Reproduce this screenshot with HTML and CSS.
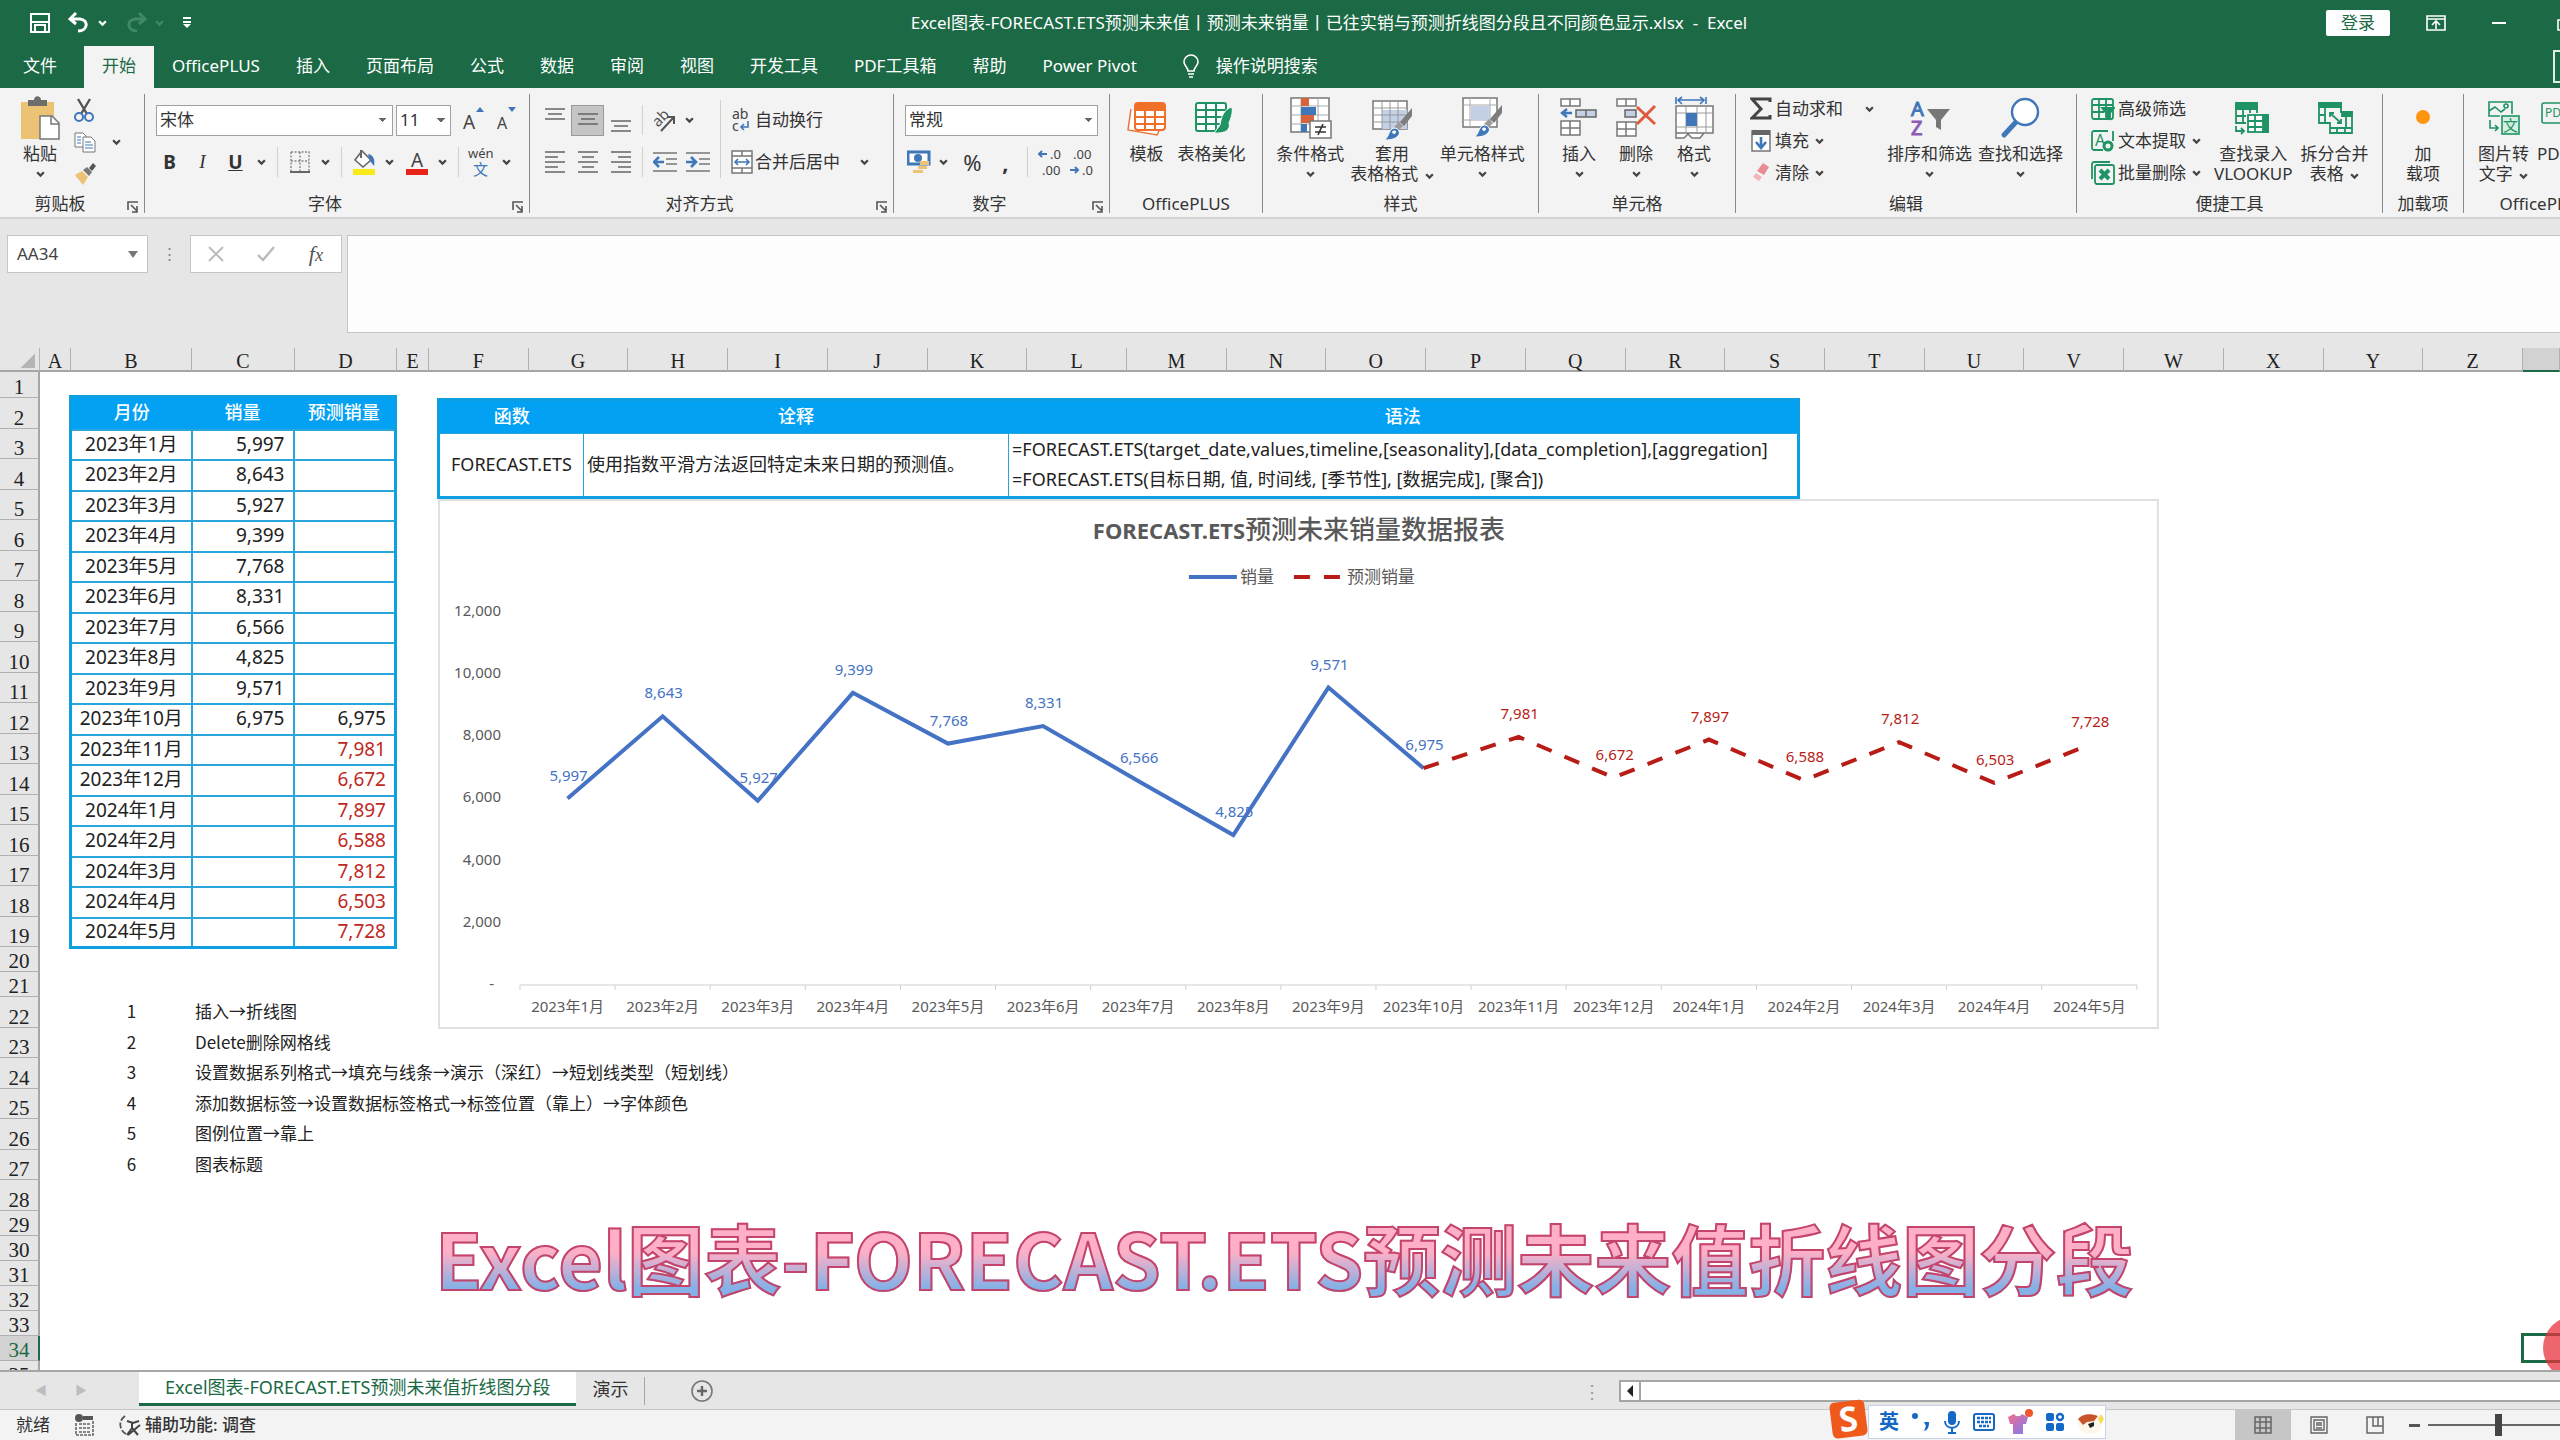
FILE: index.html
```html
<!DOCTYPE html>
<html lang="zh-CN">
<head>
  <meta charset="UTF-8">
  <meta name="viewport" content="width=device-width, initial-scale=1.0">
  <title>Excel图表-FORECAST.ETS预测未来值</title>
  <link rel="stylesheet" href="styles.css">
</head>
<body>
  <!-- shared icons -->
  <svg class="defs" aria-hidden="true">
    <symbol id="chev" viewBox="0 0 8 6"><path d="M1 1l3 3 3-3" fill="none" stroke="currentColor" stroke-width="2"/></symbol>
    <symbol id="launch" viewBox="0 0 12 12"><path d="M1 9V1h10M4 4l6 6M10 5v6H5" fill="none" stroke="#555" stroke-width="1.6"/></symbol>
    <symbol id="brush" viewBox="0 0 40 40"><path d="M39 7L27 21l4 4 8-10z" fill="#7d7d7d"/><path d="M26 21l-5 5 4 4 5-5z" fill="#9a9a9a"/><path d="M10 39c6 0 5-11 11-12 5 0 7 5 4 8-4 4-9 4-15 4z" fill="#3f77b8" stroke="#fff"/><path d="M19 31c1-2 4-2 4 0s-3 3-4 0z" fill="#fff"/></symbol>
  </svg>

  <header class="titlebar">
    <div class="quick">
      <button aria-label="保存"><svg width="20" height="22" viewBox="0 0 20 22"><path d="M1 2h18v18H1zM5 20v-7h10v7M1 10h18" fill="none" stroke="#fff" stroke-width="2"/></svg></button>
      <button aria-label="撤消"><svg width="22" height="22" viewBox="0 0 22 22"><path d="M8 1L2 7l6 5M3 7h9c9 1 8 12-2 12" fill="none" stroke="#fff" stroke-width="3"/></svg><svg class="chev"><use href="#chev"/></svg></button>
      <button aria-label="恢复" class="dim"><svg width="22" height="22" viewBox="0 0 22 22"><path d="M14 1l6 6-6 5M19 7h-9c-9 1-8 12 2 12" fill="none" stroke="currentColor" stroke-width="3"/></svg><svg class="chev"><use href="#chev"/></svg></button>
      <button aria-label="自定义"><svg width="10" height="12" viewBox="0 0 10 12"><path d="M1 1h8M1 5h8z" stroke="#fff" stroke-width="2"/><path d="M1 7h8l-4 4z" fill="#fff"/></svg></button>
    </div>
    <div class="title">Excel图表-FORECAST.ETS预测未来值丨预测未来销量丨已往实销与预测折线图分段且不同颜色显示.xlsx &nbsp;-&nbsp; Excel</div>
    <div class="window">
      <button class="login">登录</button>
      <button aria-label="功能区显示选项"><svg width="20" height="16" viewBox="0 0 20 16"><path d="M1 1h18v14H1zM1 4h18M10 14V7M6 10l4-4 4 4" fill="none" stroke="#fff" stroke-width="1.6"/></svg></button>
      <button aria-label="最小化" class="minimize"><svg width="14" height="16" viewBox="0 0 14 16"><path d="M0 8h14" stroke="#fff" stroke-width="2"/></svg></button>
      <button aria-label="还原" class="restore"><svg width="14" height="16" viewBox="0 0 14 16"><path d="M1 5h10v10H1zM4 5V1h10v10h-3" fill="none" stroke="#fff" stroke-width="1.6"/></svg></button>
    </div>
  </header>

  <nav class="tabs">
    <button class="file">文件</button>
    <button class="active">开始</button>
    <button>OfficePLUS</button>
    <button>插入</button>
    <button>页面布局</button>
    <button>公式</button>
    <button>数据</button>
    <button>审阅</button>
    <button>视图</button>
    <button>开发工具</button>
    <button>PDF工具箱</button>
    <button>帮助</button>
    <button>Power Pivot</button>
    <button class="tell"><svg width="18" height="24" viewBox="0 0 18 24"><path d="M6 17c0-4-4-5-4-9a7 7 0 0114 0c0 4-4 5-4 9zM6 20h6M7 23h4" fill="none" stroke="#fff" stroke-width="1.6"/></svg>操作说明搜索</button>
    <span class="share"></span>
  </nav>

  <div class="ribbon">
    <section class="group clip">
      <div class="body">
        <button class="big paste"><svg width="40" height="44" viewBox="0 0 40 44"><path d="M1 6h33v37H1z" fill="#ecc274"/><path d="M8 4h6c0-5 7-5 7 0h6v6H8z" fill="#6d6d6d"/><path d="M20 20h12l7 7v16H20z" fill="#fff" stroke="#777" stroke-width="1.5"/><path d="M31 20v8h8" fill="none" stroke="#777" stroke-width="1.5"/></svg><span>粘贴</span><svg class="chev"><use href="#chev"/></svg></button>
        <div class="stack">
          <button aria-label="剪切"><svg width="20" height="24" viewBox="0 0 20 24"><path d="M4 1l9 15M16 1L7 16" stroke="#555" stroke-width="2.4"/><circle cx="5" cy="19" r="4" fill="none" stroke="#3f77b8" stroke-width="2"/><circle cx="15" cy="19" r="4" fill="none" stroke="#3f77b8" stroke-width="2"/></svg></button>
          <button aria-label="复制"><svg width="22" height="22" viewBox="0 0 22 22"><path d="M1 2h8l3 3v11H1z" fill="#fff" stroke="#777"/><path d="M9 6h8l4 4v11H9z" fill="#fff" stroke="#777"/><path d="M3 6h4M3 9h4M3 12h4M11 11h6M11 14h8M11 17h8" stroke="#3f77b8"/></svg><svg class="chev"><use href="#chev"/></svg></button>
          <button aria-label="格式刷"><svg width="22" height="22" viewBox="0 0 22 22"><path d="M1 12l7-4 6 6-5 8z" fill="#ecc274"/><path d="M9 7l4-3 5 5-3 4z" fill="#777"/><path d="M15 5l4-5 3 3-4 5z" fill="#555"/></svg></button>
        </div>
      </div>
      <h2>剪贴板</h2><svg class="launch"><use href="#launch"/></svg>
    </section>

    <section class="group font">
      <div class="rows">
        <div class="row">
          <select class="w-font" aria-label="字体"><option>宋体</option></select>
          <select class="w-size" aria-label="字号"><option>11</option></select>
          <button class="tool" aria-label="增大字号"><svg width="24" height="30" viewBox="0 0 24 30"><text x="2" y="24" font-size="19" fill="#444">A</text><path d="M15 7l4-5 4 5z" fill="#3f77b8"/></svg></button>
          <button class="tool" aria-label="减小字号"><svg width="24" height="30" viewBox="0 0 24 30"><text x="3" y="24" font-size="16" fill="#444">A</text><path d="M14 2l4 5 4-5z" fill="#3f77b8"/></svg></button>
        </div>
        <div class="row">
          <button class="tool"><b>B</b></button>
          <button class="tool"><i class="serif">I</i></button>
          <button class="tool"><b><u>U</u></b></button>
          <svg class="chev"><use href="#chev"/></svg>
          <span class="sep"></span>
          <button class="tool" aria-label="边框"><svg width="20" height="22" viewBox="0 0 20 22"><path d="M1 1h18v19M1 1v19M10 1v19M1 10h18" fill="none" stroke="#888" stroke-width="1.4" stroke-dasharray="2 1.5"/><path d="M0 21h20" stroke="#666" stroke-width="2"/></svg></button>
          <svg class="chev"><use href="#chev"/></svg>
          <span class="sep"></span>
          <button class="tool" aria-label="填充颜色"><svg width="24" height="26" viewBox="0 0 24 26"><path d="M10 2l9 9-8 7-8-7z" fill="#fff" stroke="#666" stroke-width="1.6"/><path d="M9 9V1" stroke="#666" stroke-width="2"/><path d="M16 5c6 1 7 6 6 12l-4-5z" fill="#3f77b8"/><path d="M1 20h22v6H1z" fill="#f6ea18"/></svg></button>
          <svg class="chev"><use href="#chev"/></svg>
          <button class="tool" aria-label="字体颜色"><svg width="24" height="30" viewBox="0 0 24 30"><text x="6" y="20" font-size="19" fill="#444">A</text><path d="M1 22h22v6H1z" fill="#e8241a"/></svg></button>
          <svg class="chev"><use href="#chev"/></svg>
          <span class="sep"></span>
          <button class="tool" aria-label="拼音"><svg width="30" height="38" viewBox="0 0 30 38"><text x="2" y="15" font-size="13" fill="#444">wén</text><text x="7" y="32" font-size="15" fill="#3f77b8">文</text></svg></button>
          <svg class="chev"><use href="#chev"/></svg>
        </div>
      </div>
      <h2>字体</h2><svg class="launch"><use href="#launch"/></svg>
    </section>

    <section class="group align">
      <div class="rows">
        <div class="row">
          <button class="tool" aria-label="顶端对齐"><svg width="20" height="24" viewBox="0 0 20 24"><path d="M0 1h20M3 6h14M0 11h20" stroke="#666" stroke-width="1.6"/></svg></button>
          <button class="tool on" aria-label="垂直居中"><svg width="20" height="24" viewBox="0 0 20 24"><path d="M0 6h20M3 11h14M0 16h20" stroke="#666" stroke-width="1.6"/></svg></button>
          <button class="tool" aria-label="底端对齐"><svg width="20" height="24" viewBox="0 0 20 24"><path d="M0 13h20M3 18h14M0 23h20" stroke="#666" stroke-width="1.6"/></svg></button>
          <span class="sep"></span>
          <button class="tool" aria-label="方向"><svg width="28" height="28" viewBox="0 0 28 28"><text x="2" y="18" font-size="15" fill="#555" transform="rotate(-45 9 14)">ab</text><path d="M10 25L23 11M16 11h7v7" fill="none" stroke="#555" stroke-width="2"/></svg></button>
          <svg class="chev"><use href="#chev"/></svg>
        </div>
        <div class="row">
          <button class="tool" aria-label="左对齐"><svg width="20" height="24" viewBox="0 0 20 24"><path d="M0 2h20M0 7h13M0 12h20M0 17h13M0 22h20" stroke="#666" stroke-width="1.6"/></svg></button>
          <button class="tool" aria-label="居中"><svg width="20" height="24" viewBox="0 0 20 24"><path d="M0 2h20M4 7h12M0 12h20M4 17h12M0 22h20" stroke="#666" stroke-width="1.6"/></svg></button>
          <button class="tool" aria-label="右对齐"><svg width="20" height="24" viewBox="0 0 20 24"><path d="M0 2h20M7 7h13M0 12h20M7 17h13M0 22h20" stroke="#666" stroke-width="1.6"/></svg></button>
          <span class="sep"></span>
          <button class="tool" aria-label="减少缩进"><svg width="24" height="20" viewBox="0 0 24 20"><path d="M0 1h24M13 7h11M13 12h11M0 19h24" stroke="#777" stroke-width="1.6"/><path d="M11 10H2M6 5l-5 5 5 5" fill="none" stroke="#3f77b8" stroke-width="2.6"/></svg></button>
          <button class="tool" aria-label="增加缩进"><svg width="24" height="20" viewBox="0 0 24 20"><path d="M0 1h24M13 7h11M13 12h11M0 19h24" stroke="#777" stroke-width="1.6"/><path d="M0 10h9M5 5l5 5-5 5" fill="none" stroke="#3f77b8" stroke-width="2.6"/></svg></button>
        </div>
      </div>
      <div class="rows wrap">
        <button class="row"><svg width="22" height="30" viewBox="0 0 22 30"><text x="1" y="14" font-size="14" fill="#444">ab</text><text x="1" y="26" font-size="14" fill="#444">c</text><path d="M17 16v6h-6M13 19l-3 3 3 3" fill="none" stroke="#3f77b8" stroke-width="1.6"/></svg>自动换行</button>
        <button class="row"><svg width="22" height="26" viewBox="0 0 22 26"><path d="M1 2h20v22H1zM1 7h20M1 19h20M11 2v5M11 19v5" fill="#fff" stroke="#777" stroke-width="1.5"/><path d="M4 13h14M7 10l-3 3 3 3M15 10l3 3-3 3" fill="none" stroke="#3f77b8" stroke-width="1.6"/></svg>合并后居中<svg class="chev"><use href="#chev"/></svg></button>
      </div>
      <h2>对齐方式</h2><svg class="launch"><use href="#launch"/></svg>
    </section>

    <section class="group number">
      <div class="rows">
        <div class="row"><select class="w-num" aria-label="数字格式"><option>常规</option></select></div>
        <div class="row">
          <button class="tool" aria-label="会计数字格式"><svg width="24" height="24" viewBox="0 0 24 24"><path d="M1 2h21v12H1z" fill="#fff" stroke="#3f77b8" stroke-width="3"/><circle cx="11" cy="8" r="4" fill="#3f77b8"/><path d="M13 11h9v4h-9zM11 16h9v3h-9zM6 20h10v3H6z" fill="#ecc274"/></svg></button>
          <svg class="chev"><use href="#chev"/></svg>
          <button class="tool pct">%</button>
          <button class="tool pct"><b>,</b></button>
          <span class="sep"></span>
          <button class="tool" aria-label="增加小数"><svg width="30" height="36" viewBox="0 0 30 36"><text x="15" y="15" font-size="13" fill="#444">.0</text><text x="7" y="31" font-size="13" fill="#444">.00</text><path d="M12 10H4M7 7l-3 3 3 3" fill="none" stroke="#3f77b8" stroke-width="2"/></svg></button>
          <button class="tool" aria-label="减少小数"><svg width="30" height="36" viewBox="0 0 30 36"><text x="5" y="15" font-size="13" fill="#444">.00</text><text x="14" y="31" font-size="13" fill="#444">.0</text><path d="M2 26h8M7 23l3 3-3 3" fill="none" stroke="#3f77b8" stroke-width="2"/></svg></button>
        </div>
      </div>
      <h2>数字</h2><svg class="launch"><use href="#launch"/></svg>
    </section>

    <section class="group plus">
      <div class="body">
        <button class="big"><svg width="40" height="44" viewBox="0 0 40 44"><path d="M4 13L1 34l29 5 2-4" fill="#fff" stroke="#e8763a" stroke-width="1.5"/><rect x="8" y="7" width="30" height="27" rx="3" fill="#fff" stroke="#f0702a" stroke-width="2"/><path d="M8 7h30v8H8z" fill="#f0702a"/><path d="M8 21h30M8 28h30M18 15v19M28 15v19" stroke="#f0702a" stroke-width="2"/></svg><span>模板</span></button>
        <button class="big"><svg width="40" height="44" viewBox="0 0 40 44"><rect x="4" y="7" width="30" height="28" rx="2" fill="#fff" stroke="#1f9363" stroke-width="2"/><path d="M4 14h30M4 21h28M4 28h24M14 7v28M24 7v28" stroke="#1f9363" stroke-width="2"/><path d="M40 11c-8 2-11 10-12 18l-6 8c12 1 17-4 15-10 2-5 4-10 3-16z" fill="#1f9363" stroke="#fff"/></svg><span>表格美化</span></button>
      </div>
      <h2>OfficePLUS</h2>
    </section>

    <section class="group style">
      <div class="body">
        <button class="big"><svg width="44" height="44" viewBox="0 0 44 44"><path d="M3 2h38v34H3z" fill="#fff" stroke="#777" stroke-width="1.5"/><path d="M3 10h38M3 19h38M3 28h38M13 2v34M30 2v34" stroke="#aaa"/><path d="M13 2h8v8h-8zM13 19h13v8H13z" fill="#d9623b"/><path d="M13 11h15v8H13zM13 28h6v8h-6z" fill="#3f77b8"/><path d="M22 25h21v17H22z" fill="#fff" stroke="#777" stroke-width="1.5"/><path d="M27 31h11M27 36h11M35 28l-5 11" stroke="#333" stroke-width="1.6"/></svg><span>条件格式</span><svg class="chev"><use href="#chev"/></svg></button>
        <button class="big"><svg width="44" height="44" viewBox="0 0 44 44"><path d="M3 5h34v28H3z" fill="#fff" stroke="#777" stroke-width="1.5"/><path d="M12 14h25v19H12z" fill="#c3d0e6"/><path d="M3 12h34M3 19h34M3 26h34M12 5v28M20 5v28M28 5v28" stroke="#999"/><use href="#brush" x="3" y="5" width="40" height="40"/></svg><span>套用</span><span>表格格式 <svg class="chev"><use href="#chev"/></svg></span></button>
        <button class="big"><svg width="44" height="44" viewBox="0 0 44 44"><path d="M3 2h34v29H3z" fill="#fff" stroke="#777" stroke-width="1.5"/><path d="M3 9h34M3 24h34M10 2v29M30 2v29" stroke="#aaa"/><path d="M11 10h19v14H11z" fill="#c3d0e6"/><use href="#brush" x="3" y="2" width="40" height="40"/></svg><span>单元格样式</span><svg class="chev"><use href="#chev"/></svg></button>
      </div>
      <h2>样式</h2>
    </section>

    <section class="group cells">
      <div class="body">
        <button class="big"><svg width="40" height="44" viewBox="0 0 40 44"><path d="M2 3h19v7H2zM11 3v7M2 25h19v14H2zM11 25v14M2 32h19" fill="#fff" stroke="#777" stroke-width="1.5"/><path d="M17 14h20v7H17zM27 14v7" fill="#c3d0e6" stroke="#666" stroke-width="1.5"/><path d="M13 17H4M8 13l-5 4 5 4" fill="none" stroke="#3f77b8" stroke-width="2.4"/></svg><span>插入</span><svg class="chev"><use href="#chev"/></svg></button>
        <button class="big"><svg width="42" height="44" viewBox="0 0 42 44"><path d="M2 3h19v7H2zM11 3v7M2 26h19v14H2zM11 26v14M2 33h19" fill="#fff" stroke="#777" stroke-width="1.5"/><path d="M10 14h11v7H10z" fill="#c3d0e6" stroke="#666" stroke-width="1.5"/><path d="M22 11l18 17M40 10L22 28" stroke="#e05a3c" stroke-width="3"/></svg><span>删除</span><svg class="chev"><use href="#chev"/></svg></button>
        <button class="big"><svg width="42" height="44" viewBox="0 0 42 44"><path d="M3 1v7M33 1v7M5 4h26M9 1L5 4l4 4M27 1l4 3-4 4" fill="none" stroke="#3f77b8" stroke-width="1.6"/><path d="M3 10h37v27H3zM3 37v5h8l4-4 4 4h8l4-5" fill="#fff" stroke="#777" stroke-width="1.5"/><path d="M3 17h37M3 31h37M13 10v27M24 10v27M33 10v27" stroke="#999"/><path d="M13 17h11v13H13z" fill="#3f77b8"/></svg><span>格式</span><svg class="chev"><use href="#chev"/></svg></button>
      </div>
      <h2>单元格</h2>
    </section>

    <section class="group edit">
      <div class="body">
        <div class="list">
          <button><svg width="22" height="24" viewBox="0 0 22 24"><path d="M20 5V2H2l9 10-9 9h18v-3" fill="none" stroke="#444" stroke-width="3"/></svg>自动求和<svg class="chev far"><use href="#chev"/></svg></button>
          <button><svg width="22" height="24" viewBox="0 0 22 24"><path d="M2 2h18v20H2z" fill="#fff" stroke="#777" stroke-width="1.5"/><path d="M2 1h18v5H2z" fill="#666"/><path d="M11 8v10M6 13l5 6 5-6" fill="none" stroke="#3f77b8" stroke-width="2.6"/></svg>填充<svg class="chev"><use href="#chev"/></svg></button>
          <button><svg width="22" height="24" viewBox="0 0 22 24"><path d="M13 2l6 4-5 8-7-4z" fill="#e98a95"/><path d="M6 12l6 4-3 4-6-4z" fill="#f2b3ba"/></svg>清除<svg class="chev"><use href="#chev"/></svg></button>
        </div>
        <button class="big"><svg width="42" height="44" viewBox="0 0 42 44"><text x="2" y="20" font-size="20" fill="#3f77b8" stroke="#3f77b8">A</text><text x="2" y="39" font-size="20" fill="#8e5bb5" stroke="#8e5bb5">Z</text><path d="M18 13h23L32 24v10l-5-3v-7z" fill="#777"/></svg><span>排序和筛选</span><svg class="chev"><use href="#chev"/></svg></button>
        <button class="big"><svg width="42" height="44" viewBox="0 0 42 44"><path d="M16 26L4 39" stroke="#3f77b8" stroke-width="5" stroke-linecap="round"/><circle cx="25" cy="16" r="13" fill="#fff" stroke="#3f77b8" stroke-width="2.4"/></svg><span>查找和选择</span><svg class="chev"><use href="#chev"/></svg></button>
      </div>
      <h2>编辑</h2>
    </section>

    <section class="group tools">
      <div class="body">
        <div class="list">
          <button><svg width="24" height="24" viewBox="0 0 24 24" fill="none" stroke="#1f9363" stroke-width="1.8"><rect x="1" y="2" width="21" height="20" rx="2"/><path d="M1 8h21M1 15h12M8 2v20M15 2v8"/><path d="M11 11h12l-4 5v6l-4-2v-4z" fill="#1f9363"/></svg>高级筛选</button>
          <button><svg width="24" height="24" viewBox="0 0 24 24"><path d="M12 21H3c-1 0-2-1-2-2V4c0-1 1-2 2-2h14M22 2v10" fill="none" stroke="#1f9363" stroke-width="1.8"/><text x="4" y="17" font-size="16" fill="#1f9363">A</text><circle cx="17" cy="17" r="4" fill="none" stroke="#1f9363" stroke-width="3"/></svg>文本提取<svg class="chev"><use href="#chev"/></svg></button>
          <button><svg width="24" height="24" viewBox="0 0 24 24" fill="none" stroke="#1f9363" stroke-width="1.8"><path d="M1 18V3c0-1 1-2 2-2h16"/><rect x="4" y="4" width="19" height="19" rx="2"/><path d="M9 9l9 9M18 9l-9 9" stroke-width="4"/></svg>批量删除<svg class="chev"><use href="#chev"/></svg></button>
        </div>
        <button class="big"><svg width="40" height="44" viewBox="0 0 40 44" fill="none" stroke="#1f9363" stroke-width="1.8"><path d="M3 8h21v9M3 8v19h10M3 20h10M10 13v14M17 13v4"/><path d="M3 7h21v6H3z" fill="#1f9363"/><rect x="15" y="19" width="20" height="17" fill="#fff"/><path d="M15 25h20M15 31h14M22 19v17"/><path d="M30 19h5v17h-5z" fill="#1f9363"/><path d="M3 30v5h8M8 32l3 3-3 3"/></svg><span>查找录入</span><span>VLOOKUP</span></button>
        <button class="big"><svg width="40" height="44" viewBox="0 0 40 44" fill="none" stroke="#1f9363" stroke-width="1.8"><path d="M4 7h22v9h11v21H15V27H4zM10 12v15M4 19h6M15 32h22M22 32v5M30 32v5M31 16v16"/><path d="M4 7h22v4H4zM27 16h10v4H27z" fill="#1f9363"/><path d="M15 17l11 10M15 21v-4h4M26 23v4h-4"/></svg><span>拆分合并</span><span>表格 <svg class="chev"><use href="#chev"/></svg></span></button>
      </div>
      <h2>便捷工具</h2>
    </section>

    <section class="group addin">
      <div class="body">
        <button class="big"><svg width="40" height="44" viewBox="0 0 40 44"><circle cx="20" cy="21" r="7" fill="#ff9410"/></svg><span>加</span><span>载项</span></button>
      </div>
      <h2>加载项</h2>
    </section>

    <section class="group last">
      <div class="body">
        <button class="big"><svg width="40" height="44" viewBox="0 0 40 44" fill="none" stroke="#1f9363" stroke-width="1.6"><path d="M16 20H5V6h23v12M5 15l6-4 6 5 4-3"/><circle cx="22" cy="10" r="2"/><path d="M6 24v8h8M11 29l3 3-3 3"/><rect x="18" y="20" width="17" height="18" fill="#d6efe3"/><text x="19" y="35" font-size="15" fill="#1f9363" stroke="none">文</text></svg><span>图片转</span><span>文字 <svg class="chev"><use href="#chev"/></svg></span></button>
        <button class="big"><svg width="40" height="44" viewBox="0 0 40 44"><rect x="1" y="7" width="30" height="20" rx="2" fill="none" stroke="#1f9363" stroke-width="1.6"/><text x="4" y="21" font-size="12" fill="#1f9363">PDF</text></svg><span>PDF转</span></button>
      </div>
      <h2>OfficePLUS</h2>
    </section>
  </div>

  <div class="formula-bar">
    <label class="name-box"><input type="text" value="AA34" aria-label="名称框"><svg width="10" height="7"><path d="M0 0h10L5 7z" fill="#777"/></svg></label>
    <span class="grip">⋮</span>
    <div class="fx">
      <button aria-label="取消"><svg width="16" height="16"><path d="M1 1l14 14M15 1L1 15" stroke="#bbb" stroke-width="2"/></svg></button>
      <button aria-label="输入"><svg width="18" height="16"><path d="M1 9l5 5L17 1" fill="none" stroke="#bbb" stroke-width="2.4"/></svg></button>
      <button class="serif"><i>f<small>x</small></i></button>
    </div>
    <textarea aria-label="编辑栏"></textarea>
  </div>

  <main class="sheet" id="sheet">
    <div class="corner"></div>

    <table class="data">
      <thead><tr><th>月份</th><th>销量</th><th>预测销量</th></tr></thead>
      <tbody id="rows"></tbody>
    </table>

    <table class="func">
      <thead><tr><th>函数</th><th>诠释</th><th>语法</th></tr></thead>
      <tbody>
        <tr>
          <td class="center">FORECAST.ETS</td>
          <td>使用指数平滑方法返回特定未来日期的预测值。</td>
          <td>=FORECAST.ETS(target_date,values,timeline,[seasonality],[data_completion],[aggregation]<br>=FORECAST.ETS(目标日期, 值, 时间线, [季节性], [数据完成], [聚合])</td>
        </tr>
      </tbody>
    </table>

    <svg class="chart" id="chart" viewBox="0 0 1721 530"></svg>

    <ol class="steps">
      <li>插入→折线图</li>
      <li>Delete删除网格线</li>
      <li>设置数据系列格式→填充与线条→演示（深红）→短划线类型（短划线）</li>
      <li>添加数据标签→设置数据标签格式→标签位置（靠上）→字体颜色</li>
      <li>图例位置→靠上</li>
      <li>图表标题</li>
    </ol>

    <div class="wordart">Excel图表-FORECAST.ETS预测未来值折线图分段</div>
    <div class="selection"></div>
  </main>

  <div class="sheet-tabs">
    <div class="arrows"><span>◀</span><span>▶</span></div>
    <button class="active">Excel图表-FORECAST.ETS预测未来值折线图分段</button>
    <button>演示</button>
    <button class="add" aria-label="新工作表"><svg width="24" height="24"><circle cx="12" cy="12" r="10" fill="none" stroke="#777" stroke-width="1.6"/><path d="M12 7v10M7 12h10" stroke="#666" stroke-width="2.4"/></svg></button>
    <span class="grip">⋮</span>
    <div class="scroll"><button aria-label="向左滚动"><svg width="8" height="12"><path d="M7 0v12L1 6z" fill="#222"/></svg></button></div>
  </div>

  <footer class="status">
    <span>就绪</span>
    <svg width="20" height="22" viewBox="0 0 20 22"><circle cx="5" cy="4" r="4" fill="#555"/><path d="M9 2h10v4H9z" fill="#555"/><path d="M2 9v12h17V6M5 10h11M5 14h11M5 18h11" fill="none" stroke="#666" stroke-width="1.6" stroke-dasharray="3 1"/></svg>
    <button class="access"><svg width="24" height="24" viewBox="0 0 24 24"><path d="M7 3C0 8 1 17 8 21" fill="none" stroke="#555" stroke-width="1.8" stroke-dasharray="6 2"/><path d="M9 8l6 2 6-2M14 10v5l-5 7M14 15l6 7M22 12L10 22" fill="none" stroke="#444" stroke-width="2"/></svg>辅助功能: 调查</button>
    <div class="views">
      <button class="on" aria-label="普通"><svg width="18" height="18"><path d="M1 1h16v16H1zM1 6h16M1 12h16M6 1v16M12 1v16" fill="none" stroke="#666" stroke-width="1.5"/></svg></button>
      <button aria-label="页面布局"><svg width="18" height="18"><path d="M1 1h16v16H1zM4 4h10v10H4zM6 7h6M6 9h6M6 12h6" fill="none" stroke="#666" stroke-width="1.4"/></svg></button>
      <button aria-label="分页预览"><svg width="18" height="18"><path d="M1 1h16v16H1zM7 1v9h10M12 1v9" fill="none" stroke="#666" stroke-width="1.5"/></svg></button>
      <span class="minus"></span>
      <input type="range" min="0" max="200" value="100" aria-label="缩放">
    </div>
  </footer>

  <!-- floating input method bar -->
  <div class="ime">
    <svg class="logo" width="42" height="42" viewBox="0 0 42 42"><rect x="3" y="3" width="35" height="36" rx="5" fill="#ef5a1c" transform="rotate(-7 21 21)"/><text x="11" y="33" font-size="34" font-weight="bold" fill="#fff" transform="rotate(-7 21 21)">S</text></svg>
    <b>英</b>
    <svg width="20" height="24"><circle cx="4" cy="6" r="3" fill="#1469c7"/><path d="M13 12h5c0 5-1 8-5 9l2-5z" fill="#1469c7"/></svg>
    <svg width="18" height="24"><rect x="5" y="1" width="8" height="14" rx="4" fill="#1469c7"/><path d="M2 11c0 9 14 9 14 0M9 18v5M5 23h8" fill="none" stroke="#1469c7" stroke-width="2"/></svg>
    <svg width="22" height="20"><rect x="1" y="2" width="20" height="16" rx="2" fill="none" stroke="#1469c7" stroke-width="2"/><path d="M4 6h14M4 10h14M6 14h10" stroke="#1469c7" stroke-width="2.4" stroke-dasharray="3 1"/></svg>
    <svg width="26" height="28"><defs><linearGradient id="shirt" x2="1" y2="1"><stop offset="0" stop-color="#f46c8c"/><stop offset="1" stop-color="#7b7cf5"/></linearGradient></defs><path d="M1 9l6-3c2 3 6 3 8 0l6 3-2 7h-3v10H6V16H3z" fill="url(#shirt)"/><circle cx="22" cy="5" r="4" fill="#f0562c"/></svg>
    <svg width="20" height="20" fill="#1469c7"><rect x="1" y="1" width="8" height="8" rx="2"/><circle cx="15" cy="5" r="3" fill="none" stroke="#1469c7" stroke-width="2.4"/><rect x="1" y="11" width="8" height="8" rx="2"/><rect x="11" y="11" width="8" height="8" rx="2"/></svg>
    <svg width="28" height="26"><ellipse cx="13" cy="15" rx="12" ry="10" fill="#fff6ea"/><path d="M1 10c4-5 12-6 20-3l-4 5-7 1-4 3z" fill="#c9542a"/><path d="M11 15l6-2v4l-4 2z" fill="#222"/><path d="M24 5l3 5-3 5-3-5z" fill="#f7dc4e"/></svg>
  </div>

  <script src="script.js"></script>
</body>
</html>
```
FILE: styles.css
```css
* {
  box-sizing: border-box;
}

body {
  display: flex;
  flex-direction: column;
  height: 100vh;
  margin: 0;
  overflow: hidden;
  background: #e6e6e6;
  color: #333;
  font: 17px/20px "Noto Sans", "Noto Sans CJK SC", sans-serif;
}

button {
  display: flex;
  align-items: center;
  justify-content: center;
  padding: 0;
  border: 0;
  background: none;
  color: inherit;
  font: inherit;
  white-space: nowrap;
}

.defs {
  position: absolute;
  width: 0;
  height: 0;
}

.chev {
  flex: none;
  width: 9px;
  height: 7px;
  color: #444;
}

.serif {
  font-family: "Liberation Serif", serif;
}

/* title bar */
.titlebar {
  display: grid;
  grid-template-columns: 1fr auto 1fr;
  align-items: center;
  height: 46px;
  background: #1b6a45;
  color: #fff;
}

.quick {
  display: flex;
  gap: 18px;
  padding-left: 30px;
}

.quick button {
  gap: 8px;
}

.quick .chev {
  color: #fff;
}

.quick .dim,
.quick .dim .chev {
  color: #3f8a63;
}

.title {
  margin-right: -98px;
  white-space: nowrap;
}

.window {
  display: flex;
  justify-content: flex-end;
  align-items: center;
  gap: 36px;
}

.window .minimize {
  margin-left: 10px;
}

.window .restore {
  margin: 0 -11px 0 15px;
}

.login {
  width: 64px;
  height: 26px;
  border-radius: 2px;
  background: #fff;
  color: #1b6a45;
}

.tabs {
  display: flex;
  height: 42px;
  background: #1b6a45;
  color: #fff;
}

.tabs button {
  padding: 0 18px 2px;
}

.tabs .file {
  padding: 0 27px 2px 23px;
}

.tabs .active {
  background: #f3f3f3;
  color: #1b6a45;
}

.tabs .tell {
  gap: 16px;
  padding-left: 27px;
}

.share {
  width: 7px;
  height: 33px;
  margin: 4px 0 0 auto;
  border: 2px solid #dfeee6;
  border-right: 0;
}

/* ribbon */
.ribbon {
  display: flex;
  height: 131px;
  padding-top: 6px;
  overflow: hidden;
  background: #f3f3f3;
  border-bottom: 2px solid #d2d2d2;
}

.group {
  position: relative;
  display: grid;
  grid-template: 100px 20px / auto;
  flex: none;
  height: 119px;
  border-right: 1px solid #8a8a8a;
}

.group h2 {
  grid-row: 2;
  grid-column: 1 / -1;
  margin: 0;
  font-size: 17px;
  font-weight: normal;
  text-align: center;
}

.launch {
  position: absolute;
  right: 5px;
  bottom: 0;
  width: 12px;
  height: 12px;
}

.clip { width: 145px; }
.font { width: 385px; }
.align { width: 364px; grid-template-columns: 190px 1fr; }
.number { width: 216px; }
.plus { width: 153px; }
.style { width: 276px; }
.cells { width: 197px; }
.edit { width: 341px; }
.tools { width: 306px; }
.addin { width: 81px; }
.last { width: 160px; }

.clip h2,
.font h2,
.align h2,
.number h2 {
  padding-right: 24px;
}

.body {
  display: flex;
  align-items: flex-start;
  justify-content: center;
}

.big {
  flex-direction: column;
  justify-content: flex-start;
  padding: 2px 4px 0;
}

.big > svg:first-child {
  margin-bottom: 4px;
}

.big > .chev {
  margin-top: 7px;
}

.big span .chev {
  margin-left: 2px;
}

.plus .body {
  gap: 3px;
}

.style .big,
.edit .big {
  padding: 2px 3px 0;
}

.cells .body {
  gap: 8px;
}

.clip .body {
  justify-content: flex-start;
  gap: 10px;
  padding-left: 16px;
}

.stack {
  display: grid;
  grid-template-rows: repeat(3, 32px);
  justify-items: start;
}

.stack button {
  gap: 16px;
}

.list {
  display: grid;
  grid-template-rows: repeat(3, 30px);
  gap: 2px;
  justify-items: start;
  width: 134px;
}

.tools .list {
  width: 119px;
}

.list button {
  gap: 3px;
}

.list .chev {
  margin-left: 3px;
}

.list .far {
  margin-left: 19px;
}

.edit .body,
.tools .body {
  justify-content: flex-start;
  padding-left: 14px;
}

.last .body {
  justify-content: flex-start;
  padding-left: 10px;
}

.rows {
  display: grid;
  grid-template-rows: 32px 32px;
  align-content: start;
  gap: 10px;
  padding: 10px 0 0 8px;
}

.row {
  display: flex;
  align-items: center;
  justify-content: flex-start;
}

.tool {
  width: 33px;
  height: 31px;
  font-size: 19px;
}

.row .chev {
  margin: 0 4px;
}

.row .sep {
  width: 1px;
  height: 30px;
  margin: 0 5px;
  background: #d0d0d0;
}

.font .tool + .chev {
  margin: 0 6px 0 5px;
}

.tool.on {
  background: #c5c5c5;
  border: 1px solid #9a9a9a;
}

.number .chev {
  margin: 0 8px 0 4px;
}

.pct {
  font-size: 22px;
}

.wrap {
  margin: 6px 0 16px;
  padding: 4px 0 0 10px;
  border-left: 1px solid #d0d0d0;
}

.wrap .row {
  gap: 2px;
}

.wrap .chev {
  margin-left: 18px;
}

.group select {
  height: 31px;
  margin-right: 3px;
  padding: 0 6px 0 3px;
  appearance: none;
  border: 1px solid #a0a0a0;
  border-radius: 0;
  background:
    linear-gradient(45deg, transparent 50%, #666 50%) no-repeat right 9px center / 4px 4px,
    linear-gradient(-45deg, transparent 50%, #666 50%) no-repeat right 5px center / 4px 4px,
    #fff;
  color: #333;
  font: inherit;
}

.group .w-font {
  width: 237px;
  margin-left: 3px;
}

.group .w-size {
  width: 55px;
  margin-right: 5px;
}

.group .w-num {
  width: 193px;
  margin-left: 3px;
}

/* formula bar */
.formula-bar {
  display: flex;
  align-items: flex-start;
  height: 129px;
  padding: 16px 0 0 7px;
}

.name-box {
  display: flex;
  align-items: center;
  width: 141px;
  height: 38px;
  padding: 0 9px;
  border: 1px solid #c6c6c6;
  background: #fff;
}

.name-box input {
  flex: 1;
  min-width: 0;
  padding: 0;
  border: 0;
  color: #444;
  font: inherit;
}

.formula-bar .grip {
  width: 42px;
  line-height: 38px;
  text-align: center;
  color: #888;
}

.fx {
  display: flex;
  justify-content: space-around;
  width: 152px;
  height: 38px;
  border: 1px solid #c6c6c6;
  background: #fff;
}

.fx button {
  width: 50px;
  color: #555;
  font-size: 22px;
}

.formula-bar textarea {
  flex: 1;
  height: 98px;
  margin-left: 5px;
  border: 1px solid #c6c6c6;
  border-right: 0;
  background: #fdfdfd;
  resize: none;
}

/* sheet */
.sheet {
  display: grid;
  flex: 1;
  min-height: 0;
  overflow: hidden;
  grid-template-columns: 40px 31px 121px 103px 102px 32px repeat(21, 1fr) 37px;
  grid-template-rows: 24px 26px repeat(9, 31px 30px) 25px 25px repeat(3, 31px 30px) 31px repeat(7, 25px);
  background: linear-gradient(#e6e6e6 24px, #fff 24px);
  border-bottom: 2px solid #a6a6a6;
}

.corner {
  grid-area: 1 / 1;
  border-right: 1px solid #b5b5b5;
  border-bottom: 2px solid #a6a6a6;
  background: linear-gradient(135deg, transparent 50%, #b5b5b5 50%) no-repeat 20px 6px / 15px 14px;
}

.col,
.rownum {
  color: #222;
  font: 21px/20px "Liberation Serif", serif;
  text-align: center;
}

.col {
  grid-row: 1;
  padding-top: 4px;
  border-right: 1px solid #b0b0b0;
  border-bottom: 2px solid #a6a6a6;
  font-size: 20px;
  line-height: 18px;
}

.rownum {
  display: flex;
  align-items: flex-end;
  justify-content: center;
  grid-column: 1;
  background: #e6e6e6;
  border-right: 2px solid #a6a6a6;
  border-bottom: 1px solid #b0b0b0;
  overflow: hidden;
}

.col.on {
  background: #d2d2d2;
  border-bottom-color: #1b6a45;
}

.rownum.on {
  background: #d2d2d2;
  border-right-color: #1b6a45;
  color: #1b6a45;
}

table {
  border-collapse: collapse;
  table-layout: fixed;
  color: #222;
}

th {
  padding: 0 0 2px;
  background: #03a1f3;
  color: #fff;
  font-size: 18px;
  font-weight: 500;
}

.data {
  grid-area: 3 / 3 / span 18 / span 3;
  width: calc(100% + 2px);
  margin: -3px 0 0 -2px;
  border: 3px solid #0d9fe0;
  font-size: 19px;
}

.data tr:nth-child(odd) {
  height: 30px;
}

.data tr:nth-child(even) {
  height: 31px;
}

.data thead tr:nth-child(1) {
  height: 33px;
}

.data th:first-child {
  width: 121px;
}

.data td {
  padding: 0 8px 2px 0;
  border: 2px solid #2ba6dc;
  text-align: right;
}

.data td:first-child {
  padding: 0 0 2px;
  text-align: center;
}

.data .red {
  color: #c0281f;
}

.func {
  grid-area: 3 / 7 / span 3 / span 14;
  height: 95px;
  margin: 0 25px 0 8px;
  border: 3px solid #0d9fe0;
  font-size: 18px;
  line-height: 30px;
}

.func th {
  height: 31px;
}

.func th:nth-child(1) { width: 145px; }
.func th:nth-child(2) { width: 425px; }

.func td {
  padding: 0 3px 2px;
  border: 1px solid #2ba6dc;
  white-space: nowrap;
}

.func .center {
  text-align: center;
}

.chart {
  grid-area: 6 / 7 / span 18 / span 18;
  width: calc(100% - 74px);
  height: 530px;
  margin: 9px 0 0 9px;
  background: #fff;
  font-size: 15px;
}

.chart .frame { fill: none; stroke: #e0e0e0; stroke-width: 2; }
.chart .axis { fill: none; stroke: #d0d0d0; stroke-width: 1; }
.chart text { fill: #595959; text-anchor: middle; }
.chart .end { text-anchor: end; }
.chart .start { text-anchor: start; font-size: 17px; }
.chart .heading { font-size: 22px; font-weight: bold; }
.chart .heading tspan { font-size: 26px; font-weight: 500; }
.chart .sales { fill: none; stroke: #4472c4; stroke-width: 4; }
.chart .forecast { fill: none; stroke: #b81c17; stroke-width: 4; stroke-dasharray: 16 14; }
.chart .sales-label { fill: #4472c4; }
.chart .forecast-label { fill: #b81c17; }

.steps {
  grid-area: 23 / 3 / span 6 / span 12;
  display: grid;
  grid-template-rows: subgrid;
  margin: 0;
  padding: 0;
  list-style: none;
  counter-reset: step;
  color: #222;
  font-family: "Noto Sans CJK SC", sans-serif;
}

.steps li {
  display: flex;
  align-items: center;
  padding-bottom: 3px;
  counter-increment: step;
}

.steps li::before {
  content: counter(step);
  width: 121px;
  margin-right: 3px;
  text-align: center;
}

.wordart {
  grid-area: 29 / 7 / span 5 / span 20;
  align-self: end;
  justify-self: start;
  margin-left: 6px;
  background: linear-gradient(#ffb0c6 45%, #86b1e6 78%);
  background-clip: text;
  color: transparent;
  -webkit-text-stroke: 2px #c4456c;
  font: 700 77px/108px "Noto Sans CJK SC", sans-serif;
  white-space: nowrap;
}

/* active cell with the pointer highlight over it */
.selection {
  grid-area: 35 / 28;
  position: relative;
  margin: -3px -4px -2px -2px;
  border: 3px solid #1b6a45;
}

.selection::after {
  content: "";
  position: absolute;
  top: -20px;
  left: 19px;
  width: 64px;
  height: 64px;
  border-radius: 50%;
  background: rgba(232, 50, 62, 0.75);
}

/* sheet tabs */
.sheet-tabs {
  display: flex;
  align-items: center;
  height: 38px;
  border-bottom: 1px solid #c6c6c6;
  font-size: 18px;
}

.arrows {
  display: flex;
  gap: 28px;
  width: 139px;
  padding-left: 35px;
  color: #bdbdbd;
  font-size: 12px;
}

.sheet-tabs button {
  height: 28px;
  padding: 0 16px 4px;
  border-right: 1px solid #a6a6a6;
}

.sheet-tabs .active {
  align-self: flex-start;
  height: 34px;
  padding: 0 26px 2px;
  border: 0;
  border-bottom: 3px solid #1b6a45;
  background: #fff;
  color: #1b6a45;
}

.sheet-tabs .add {
  margin-left: 29px;
  padding-bottom: 0;
  border: 0;
}

.sheet-tabs .grip {
  margin-left: auto;
  color: #999;
}

.scroll {
  width: 941px;
  height: 22px;
  margin-left: 18px;
  border: 2px solid #a6a6a6;
  border-right: 0;
  background: #fff;
}

.scroll button {
  width: 20px;
  height: 18px;
  padding: 0;
  border-right: 2px solid #a6a6a6;
}

/* status bar */
.status {
  display: flex;
  align-items: center;
  gap: 24px;
  height: 30px;
  padding-left: 16px;
  background: #f3f3f3;
}

.access {
  gap: 3px;
  font-weight: 500;
}

.views {
  display: flex;
  align-items: center;
  height: 100%;
  margin-left: auto;
}

.views button {
  width: 56px;
  height: 100%;
}

.views .on {
  background: #c6c6c6;
}

.minus {
  width: 11px;
  height: 3px;
  margin: 0 8px 0 6px;
  background: #555;
}

.views input {
  width: 140px;
  height: 22px;
  margin: 0 -8px 0 0;
  appearance: none;
  background: linear-gradient(#666, #666) no-repeat center / 100% 2px;
}

.views input::-webkit-slider-thumb {
  appearance: none;
  width: 7px;
  height: 22px;
  background: #444;
}

.ime {
  position: absolute;
  right: 454px;
  bottom: 1px;
  display: flex;
  align-items: center;
  justify-content: space-between;
  width: 238px;
  height: 34px;
  padding-left: 10px;
  border: 1px solid #c9d3ea;
  background: #fff;
  color: #1469c7;
  font-size: 20px;
}

.ime .logo {
  position: absolute;
  left: -41px;
  bottom: -2px;
}
```
FILE: script.js
```js
const months = ['2023年1月', '2023年2月', '2023年3月', '2023年4月', '2023年5月', '2023年6月',
  '2023年7月', '2023年8月', '2023年9月', '2023年10月', '2023年11月', '2023年12月',
  '2024年1月', '2024年2月', '2024年3月', '2024年4月', '2024年5月'];
const sales = [5997, 8643, 5927, 9399, 7768, 8331, 6566, 4825, 9571, 6975];
const forecast = [6975, 7981, 6672, 7897, 6588, 7812, 6503, 7728];
const start = 9; // the forecast picks up at the last month with sales

const fmt = n => n === undefined ? '' : n.toLocaleString('en-US');

// column letters and row numbers
const sheet = document.getElementById('sheet');
for (let i = 0; i < 27; i++) {
  const el = document.createElement('div');
  el.className = i === 26 ? 'col on' : 'col';
  el.style.gridColumn = i + 2;
  el.textContent = i === 26 ? '' : String.fromCharCode(65 + i);
  sheet.appendChild(el);
}
for (let i = 1; i <= 35; i++) {
  const el = document.createElement('div');
  el.className = i === 34 ? 'rownum on' : 'rownum';
  el.style.gridRow = i + 1;
  el.textContent = i;
  sheet.appendChild(el);
}

// data table
document.getElementById('rows').innerHTML = months.map((m, i) => {
  const cls = i > start ? ' class="red"' : '';
  return `<tr><td>${m}</td><td>${fmt(sales[i])}</td><td${cls}>${fmt(forecast[i - start])}</td></tr>`;
}).join('');

// line chart
const left = 82, right = 1699, bottom = 486, step = (right - left) / months.length;
const x = i => left + step * (i + 0.5);
const y = v => bottom - v * 373 / 12000;
const points = (list, from) => list.map((v, i) => `${x(i + from)},${y(v)}`).join(' ');

let svg = '<rect class="frame" x="1" y="1" width="1719" height="528"/>';
svg += '<text class="heading" x="861" y="40">FORECAST.ETS<tspan>预测未来销量数据报表</tspan></text>';
svg += '<path class="sales" d="M751 78h48"/><text class="start" x="802" y="84">销量</text>';
svg += '<path class="forecast" d="M856 78h48"/><text class="start" x="909" y="84">预测销量</text>';
for (let v = 0; v <= 12000; v += 2000) {
  svg += `<text class="end" x="${v ? 63 : 56}" y="${y(v) + 4}">${v ? fmt(v) : '-'}</text>`;
}
svg += `<path class="axis" d="M${left} ${bottom}H${right}"/>`;
months.forEach((m, i) => {
  svg += `<path class="axis" d="M${left + step * i} ${bottom}v5"/>`;
  svg += `<text x="${x(i)}" y="513">${m}</text>`;
});
svg += `<path class="axis" d="M${right} ${bottom}v5"/>`;
svg += `<polyline class="sales" points="${points(sales, 0)}"/>`;
svg += `<polyline class="forecast" points="${points(forecast, start)}"/>`;
sales.forEach((v, i) => {
  svg += `<text class="sales-label" x="${x(i) + 1}" y="${y(v) - 18}">${fmt(v)}</text>`;
});
forecast.slice(1).forEach((v, i) => {
  svg += `<text class="forecast-label" x="${x(i + start + 1) + 1}" y="${y(v) - 18}">${fmt(v)}</text>`;
});
document.getElementById('chart').innerHTML = svg;
```
